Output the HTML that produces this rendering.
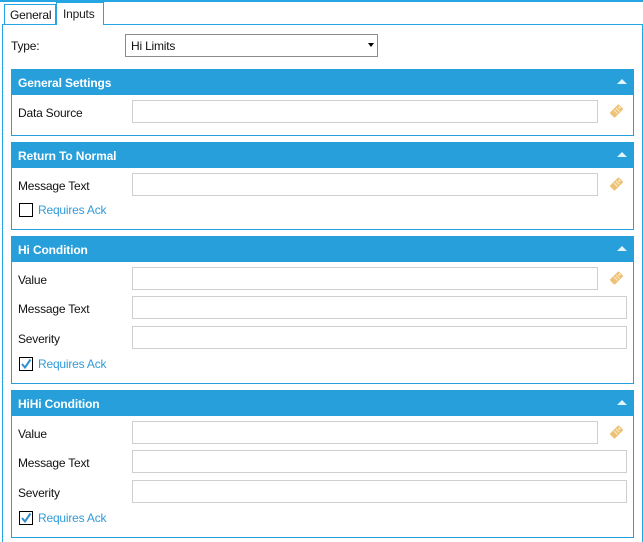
<!DOCTYPE html>
<html><head><meta charset="utf-8">
<style>
html,body{margin:0;padding:0;background:#fff}
body{width:643px;height:542px;position:relative;overflow:hidden;font:12px/16px "Liberation Sans",sans-serif;color:#111;letter-spacing:-.2px}
div{position:absolute;box-sizing:border-box}
.g{left:11px;width:623px;border:1px solid #269fdb;border-top:0}
.h{top:0;height:26px;background:#269fdb;color:#fff;font-weight:bold;font-size:12px;line-height:28px;padding-left:7px;left:-1px;right:-1px;letter-spacing:-.13px}
.h:after{content:"";position:absolute;right:7px;top:10px;border-left:5px solid transparent;border-right:5px solid transparent;border-bottom:5px solid #e0f4fc}
.i{left:132px;height:23px;background:#fff;border:1px solid #cfcfcf}
.s{width:466px}.l{width:495px}
.t{left:18px;white-space:nowrap}
.c{left:19px;width:14px;height:14px;border:1px solid #000;background:#fff}
.a{left:38px;color:#2f9bd8;white-space:nowrap}
svg{position:absolute}
</style></head><body>
<div style="left:0;top:0;width:643px;height:2px;background:#26a5e4"></div>
<div style="left:2px;top:24px;width:641px;height:518px;border-left:1px solid #26a5e4;border-top:1px solid #26a5e4;border-right:1px solid #26a5e4"></div>
<div style="left:4px;top:4px;width:52px;height:21px;border:1px solid #26a5e4;background:#fff;padding-left:5px;line-height:21px">General</div>
<div style="left:56px;top:2px;width:48px;height:23px;border:1px solid #26a5e4;border-bottom:0;background:#fff;padding-left:6px;line-height:22px;color:#222">Inputs</div>

<div class="t" style="left:11px;top:38px">Type:</div>
<div style="left:125px;top:34px;width:253px;height:23px;border:1px solid #8c8c8c;background:#fff;padding-left:5px;line-height:22px">Hi Limits<div style="right:3px;top:8px;border-left:3.500px solid transparent;border-right:3.500px solid transparent;border-top:4px solid #000"></div></div>

<div class="g" style="top:69px;height:67px"><div class="h">General Settings</div></div>
<div class="t" style="top:105px">Data Source</div>
<div class="i s" style="top:100px"></div>

<div class="g" style="top:142px;height:88px"><div class="h">Return To Normal</div></div>
<div class="t" style="top:178px">Message Text</div>
<div class="i s" style="top:173px"></div>
<div class="c" style="top:203px"></div>
<div class="a" style="top:202px">Requires Ack</div>

<div class="g" style="top:236px;height:148px"><div class="h">Hi Condition</div></div>
<div class="t" style="top:272px">Value</div>
<div class="i s" style="top:267px"></div>
<div class="t" style="top:301px">Message Text</div>
<div class="i l" style="top:296px"></div>
<div class="t" style="top:331px">Severity</div>
<div class="i l" style="top:326px"></div>
<div class="c" style="top:357px"><svg width="12" height="12" style="left:0;top:0"><path d="M2 6l3 3.500L10.500 1.500" fill="none" stroke="#2f8fd0" stroke-width="2"/></svg></div>
<div class="a" style="top:356px">Requires Ack</div>

<div class="g" style="top:390px;height:148px"><div class="h">HiHi Condition</div></div>
<div class="t" style="top:426px">Value</div>
<div class="i s" style="top:421px"></div>
<div class="t" style="top:455px">Message Text</div>
<div class="i l" style="top:450px"></div>
<div class="t" style="top:485px">Severity</div>
<div class="i l" style="top:480px"></div>
<div class="c" style="top:511px"><svg width="12" height="12" style="left:0;top:0"><path d="M2 6l3 3.500L10.500 1.500" fill="none" stroke="#2f8fd0" stroke-width="2"/></svg></div>
<div class="a" style="top:510px">Requires Ack</div>

<svg width="643" height="542" style="left:0;top:0;pointer-events:none">
<defs><g id="tag"><path d="M-5.500 2L2-5.500L5.500-2L-2 5.500Z" fill="#eec276" stroke="#eec276" stroke-width="2" stroke-linejoin="round"/><path d="M-2.500-1L1 2.500M-.5-3L3 .5" stroke="#fbeccd" stroke-width="1"/><circle cx="3" cy="-3.500" r="1" fill="#fff5e0"/></g></defs>
<use href="#tag" x="616.500" y="111"/>
<use href="#tag" x="616.500" y="184"/>
<use href="#tag" x="616.500" y="278"/>
<use href="#tag" x="616.500" y="432"/>
</svg>
</body></html>
